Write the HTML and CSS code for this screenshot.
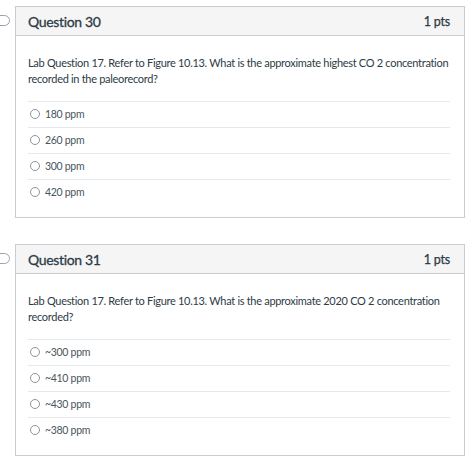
FILE: index.html
```
<!DOCTYPE html>
<html>
<head>
<meta charset="utf-8">
<link rel="stylesheet" href="styles.css">
</head>
<body>
<div class="page">
  <div class="card">
    <span class="marker"></span>
    <div class="header">
      <span class="qname">Question 30</span>
      <span class="pts">1 pts</span>
    </div>
    <div class="body">
      <p class="qtext">Lab Question 17. Refer to Figure 10.13. What is the approximate highest CO 2 concentration recorded in the paleorecord?</p>
      <div class="answers">
        <div class="answer"><span class="radio"></span><span>180 ppm</span></div>
        <div class="answer"><span class="radio"></span><span>260 ppm</span></div>
        <div class="answer"><span class="radio"></span><span>300 ppm</span></div>
        <div class="answer"><span class="radio"></span><span>420 ppm</span></div>
      </div>
    </div>
  </div>
  <div class="card">
    <span class="marker"></span>
    <div class="header">
      <span class="qname">Question 31</span>
      <span class="pts">1 pts</span>
    </div>
    <div class="body">
      <p class="qtext">Lab Question 17. Refer to Figure 10.13. What is the approximate 2020 CO 2 concentration recorded?</p>
      <div class="answers">
        <div class="answer"><span class="radio"></span><span>~300 ppm</span></div>
        <div class="answer"><span class="radio"></span><span>~410 ppm</span></div>
        <div class="answer"><span class="radio"></span><span>~430 ppm</span></div>
        <div class="answer"><span class="radio"></span><span>~380 ppm</span></div>
      </div>
    </div>
  </div>
</div>
</body>
</html>
```
FILE: styles.css
```
html, body {
  margin: 0;
  padding: 0;
  background: #ffffff;
}
body {
  font-family: Lato, "Liberation Sans", sans-serif;
  color: #2d3b45;
}
.page {
  display: flex;
  flex-direction: column;
  gap: 26px;
  padding: 6px 9px 0 15px;
}
.card {
  position: relative;
  width: 450px;
  border: 1px solid #c7cdd1;
  box-sizing: border-box;
  background: #fff;
}
.marker {
  position: absolute;
  left: -24px;
  top: 8px;
  width: 16px;
  height: 9px;
  border: 1px solid #9aa3a9;
  border-radius: 6px;
  background: #fff;
}
.header {
  height: 28px;
  background: #f5f5f5;
  border-bottom: 1px solid #c7cdd1;
  display: flex;
  align-items: center;
  justify-content: space-between;
  padding: 0 14px 0 12px;
}
.qname {
  font-size: 14px;
  font-weight: 400;
  letter-spacing: -0.35px;
  -webkit-text-stroke: 0.3px #2d3b45;
  color: #2d3b45;
}
.pts {
  font-size: 12.5px;
  font-weight: 400;
  letter-spacing: -0.2px;
  -webkit-text-stroke: 0.25px #2d3b45;
  color: #2d3b45;
}
.body {
  padding: 19px 10px 12px 12px;
}
.qtext {
  margin: 0 0 14px 0;
  font-size: 11px;
  line-height: 16px;
  letter-spacing: -0.3px;
  color: #2d3b45;
}
.answers {
  display: flex;
  flex-direction: column;
  margin-right: 4px;
}
.answer {
  height: 26px;
  border-top: 1px solid #e6e9eb;
  box-sizing: border-box;
  display: flex;
  align-items: center;
  gap: 5px;
  padding-left: 2px;
  padding-bottom: 1px;
  font-size: 10.5px;
  letter-spacing: -0.3px;
  color: #4a555c;
}
.radio {
  width: 8px;
  height: 8px;
  border: 1px solid #8b959c;
  border-radius: 50%;
  background: #fff;
}
```
